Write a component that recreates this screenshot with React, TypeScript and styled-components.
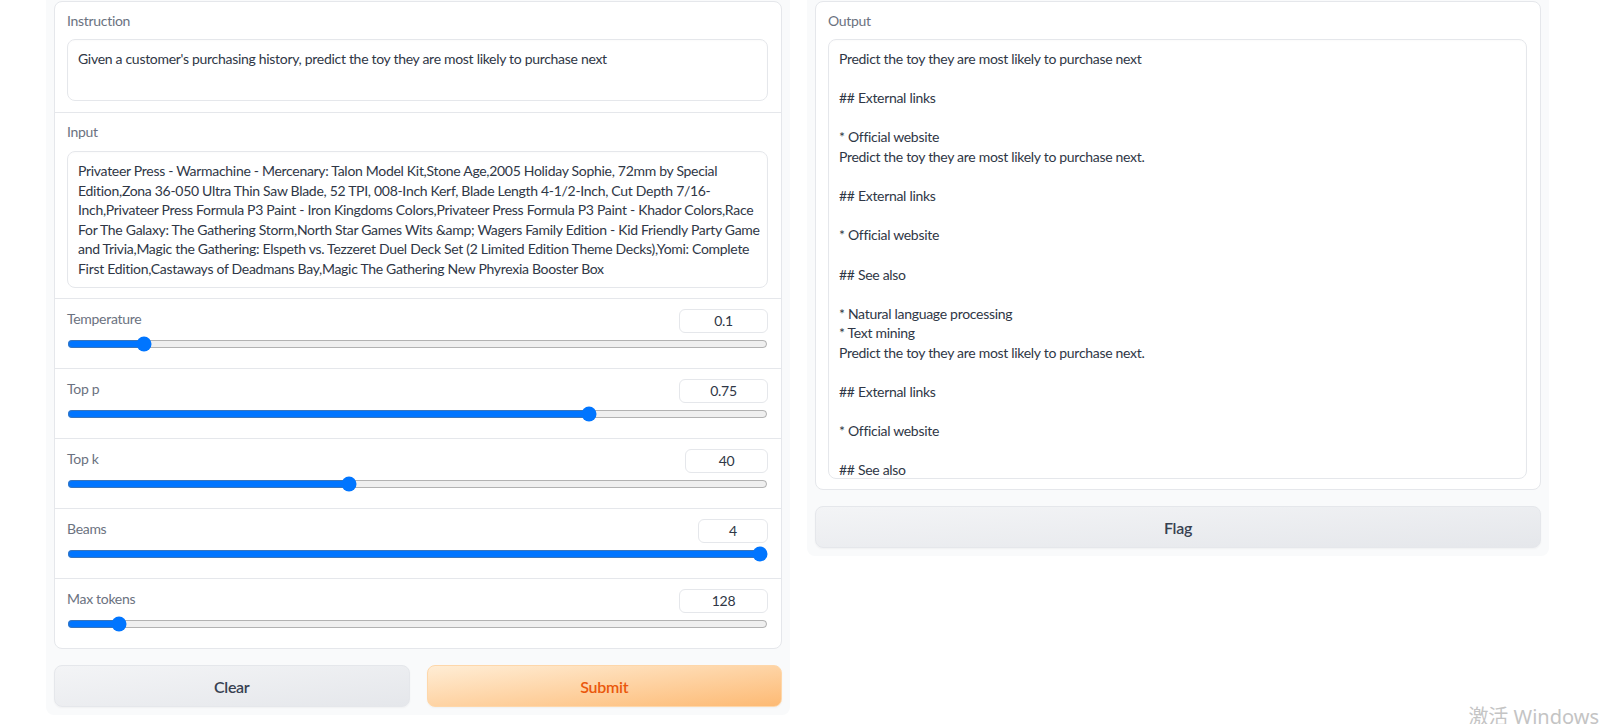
import React from "react";
import styled, { createGlobalStyle } from "styled-components";

const GlobalStyle = createGlobalStyle`
  body {
    margin: 0;
    background: #ffffff;
    font-family: "Source Sans Pro", Lato, "Liberation Sans", sans-serif;
    letter-spacing: -0.3px;
  }
`;

const Page = styled.div`
  position: relative;
  height: 724px;
  overflow: hidden;
  padding-left: 46px;
  display: grid;
  grid-template-columns: 744px 742px;
  column-gap: 17px;
  align-items: start;
`;

const Column = styled.div`
  background: #f9fafb;
  border-radius: 0 0 8px 8px;
  padding: 1px 8px 8px;
  display: flex;
  flex-direction: column;
  gap: 16px;
`;

const Card = styled.div`
  background: #ffffff;
  border: 1px solid #e5e7eb;
  border-radius: 8px;
  overflow: hidden;
`;

const Block = styled.div<{ $padBottom?: number }>`
  padding: 9px 13px ${(p) => p.$padBottom ?? 10}px 12px;
  & + & {
    border-top: 1px solid #e5e7eb;
  }
`;

const Label = styled.div`
  font-size: 14px;
  line-height: 20px;
  color: #6b7280;
`;

const FieldLabel = styled(Label)<{ $gap?: number }>`
  margin-bottom: ${(p) => p.$gap ?? 8}px;
`;

const TextBox = styled.div<{ $height: number }>`
  box-sizing: border-box;
  height: ${(p) => p.$height}px;
  border: 1px solid #e5e7eb;
  border-radius: 8px;
  padding: 9px 10px;
  font-size: 14px;
  line-height: 19.6px;
  color: #2f3746;
  white-space: pre;
  overflow: hidden;
  box-shadow: inset 0 1px 2px rgba(0, 0, 0, 0.02);
`;

const SliderBlock = styled(Block)`
  padding: 10px 13px 16px 12px;
`;

const SliderHead = styled.div`
  display: flex;
  justify-content: space-between;
  align-items: flex-start;
  height: 24px;
`;

const NumberBox = styled.div<{ $width: number }>`
  box-sizing: border-box;
  width: ${(p) => p.$width}px;
  height: 24px;
  border: 1px solid #e5e7eb;
  border-radius: 6px;
  text-align: center;
  font-size: 14px;
  line-height: 22px;
  color: #2f3746;
`;

const Range = styled.input`
  display: block;
  width: 100%;
  height: 16px;
  margin: 3px 0 0;
`;

const ButtonRow = styled.div`
  display: grid;
  grid-template-columns: 1fr 1fr;
  gap: 17px;
`;

const Button = styled.button<{ $primary?: boolean }>`
  height: 42px;
  border-radius: 8px;
  font-family: inherit;
  letter-spacing: inherit;
  font-size: 16px;
  font-weight: 600;
  cursor: pointer;
  border: 1px solid ${(p) => (p.$primary ? "#fed7aa" : "#e5e7eb")};
  color: ${(p) => (p.$primary ? "#ea580c" : "#374151")};
  background: ${(p) =>
    p.$primary
      ? "linear-gradient(to bottom right, #ffedd5, #fdba74)"
      : "linear-gradient(to bottom right, #f3f4f6, #e5e7eb)"};
  box-shadow: 0 1px 2px rgba(0, 0, 0, 0.04);
`;

const Watermark = styled.div`
  position: absolute;
  right: 8px;
  top: 705px;
  font-family: "Noto Sans", "Noto Sans CJK SC", sans-serif;
  font-size: 20px;
  line-height: 24px;
  letter-spacing: 0;
  color: #c4c4c4;
  white-space: nowrap;
`;

const inputText = [
  "Privateer Press - Warmachine - Mercenary: Talon Model Kit,Stone Age,2005 Holiday Sophie, 72mm by Special",
  "Edition,Zona 36-050 Ultra Thin Saw Blade, 52 TPI, 008-Inch Kerf, Blade Length 4-1/2-Inch, Cut Depth 7/16-",
  "Inch,Privateer Press Formula P3 Paint - Iron Kingdoms Colors,Privateer Press Formula P3 Paint - Khador Colors,Race",
  "For The Galaxy: The Gathering Storm,North Star Games Wits &amp; Wagers Family Edition - Kid Friendly Party Game",
  "and Trivia,Magic the Gathering: Elspeth vs. Tezzeret Duel Deck Set (2 Limited Edition Theme Decks),Yomi: Complete",
  "First Edition,Castaways of Deadmans Bay,Magic The Gathering New Phyrexia Booster Box",
].join("\n");

const outputText = [
  "Predict the toy they are most likely to purchase next",
  "",
  "## External links",
  "",
  "* Official website",
  "Predict the toy they are most likely to purchase next.",
  "",
  "## External links",
  "",
  "* Official website",
  "",
  "## See also",
  "",
  "* Natural language processing",
  "* Text mining",
  "Predict the toy they are most likely to purchase next.",
  "",
  "## External links",
  "",
  "* Official website",
  "",
  "## See also",
].join("\n");

type SliderProps = {
  label: string;
  value: number;
  min: number;
  max: number;
  step: number;
  boxWidth: number;
};

const sliders: SliderProps[] = [
  { label: "Temperature", value: 0.1, min: 0, max: 1, step: 0.01, boxWidth: 89 },
  { label: "Top p", value: 0.75, min: 0, max: 1, step: 0.01, boxWidth: 89 },
  { label: "Top k", value: 40, min: 0, max: 100, step: 1, boxWidth: 83 },
  { label: "Beams", value: 4, min: 1, max: 4, step: 1, boxWidth: 70 },
  { label: "Max tokens", value: 128, min: 0, max: 2000, step: 1, boxWidth: 89 },
];

function Slider({ label, value, min, max, step, boxWidth }: SliderProps) {
  return (
    <SliderBlock>
      <SliderHead>
        <Label>{label}</Label>
        <NumberBox $width={boxWidth}>{value}</NumberBox>
      </SliderHead>
      <Range type="range" min={min} max={max} step={step} defaultValue={value} />
    </SliderBlock>
  );
}

export default function App() {
  return (
    <>
      <GlobalStyle />
      <Page>
        <Column>
          <Card>
            <Block $padBottom={11}>
              <FieldLabel>Instruction</FieldLabel>
              <TextBox $height={62}>
                Given a customer's purchasing history, predict the toy they are most likely to purchase next
              </TextBox>
            </Block>
            <Block>
              <FieldLabel $gap={9}>Input</FieldLabel>
              <TextBox $height={137}>{inputText}</TextBox>
            </Block>
            {sliders.map((s) => (
              <Slider key={s.label} {...s} />
            ))}
          </Card>
          <ButtonRow>
            <Button>Clear</Button>
            <Button $primary>Submit</Button>
          </ButtonRow>
        </Column>
        <Column>
          <Card>
            <Block>
              <FieldLabel>Output</FieldLabel>
              <TextBox $height={440}>{outputText}</TextBox>
            </Block>
          </Card>
          <Button>Flag</Button>
        </Column>
        <Watermark>激活 Windows</Watermark>
      </Page>
    </>
  );
}
